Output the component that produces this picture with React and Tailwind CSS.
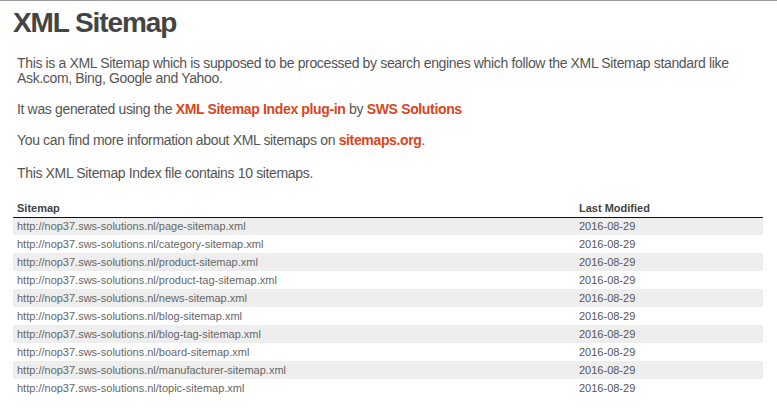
import React from 'react'

const sitemaps = [
  'page-sitemap.xml',
  'category-sitemap.xml',
  'product-sitemap.xml',
  'product-tag-sitemap.xml',
  'news-sitemap.xml',
  'blog-sitemap.xml',
  'blog-tag-sitemap.xml',
  'board-sitemap.xml',
  'manufacturer-sitemap.xml',
  'topic-sitemap.xml',
]

export default function App() {
  return (
    <div className="min-h-[411px] bg-white border-t border-[#9a9a9a] text-[#555] font-['Liberation_Sans',Arial,sans-serif]">
      <div className="pl-[13px] pr-[14px]">
        <h1 className="mt-[6px] text-[28px] leading-[32px] font-bold tracking-[-1.1px] text-[#444]">XML Sitemap</h1>

        <div className="pl-[4px] tracking-[-0.35px]">
          <p className="mt-[17px] text-[14px] leading-[15px]">
            This is a XML Sitemap which is supposed to be processed by search engines which follow the XML Sitemap standard like Ask.com, Bing, Google and Yahoo.
          </p>
          <p className="mt-[16px] text-[14px] leading-[15px]">
            It was generated using the <a className="font-bold text-[#d9461f]">XML Sitemap Index plug-in</a> by{' '}
            <a className="font-bold text-[#d9461f]">SWS Solutions</a>
          </p>
          <p className="mt-[16px] text-[14px] leading-[15px]">
            You can find more information about XML sitemaps on <a className="font-bold text-[#d9461f]">sitemaps.org</a>.
          </p>
          <p className="mt-[18px] text-[14px] leading-[15px]">
            This XML Sitemap Index file contains 10 sitemaps.
          </p>
        </div>

        <table className="mt-[18px] w-[750px] border-collapse text-[11px]">
          <thead>
            <tr className="border-b border-[#111]">
              <th className="w-[562px] h-[18px] px-[4px] text-left font-bold text-[#444]">Sitemap</th>
              <th className="h-[18px] px-[4px] text-left font-bold text-[#444]">Last Modified</th>
            </tr>
          </thead>
          <tbody>
            {sitemaps.map((s, i) => (
              <tr key={s} className={i % 2 === 0 ? 'bg-[#eeeeee]' : 'bg-white'}>
                <td className="h-[18px] px-[4px] text-[#666]">http://nop37.sws-solutions.nl/{s}</td>
                <td className="h-[18px] px-[4px] text-[#555]">2016-08-29</td>
              </tr>
            ))}
          </tbody>
        </table>
      </div>
    </div>
  )
}
